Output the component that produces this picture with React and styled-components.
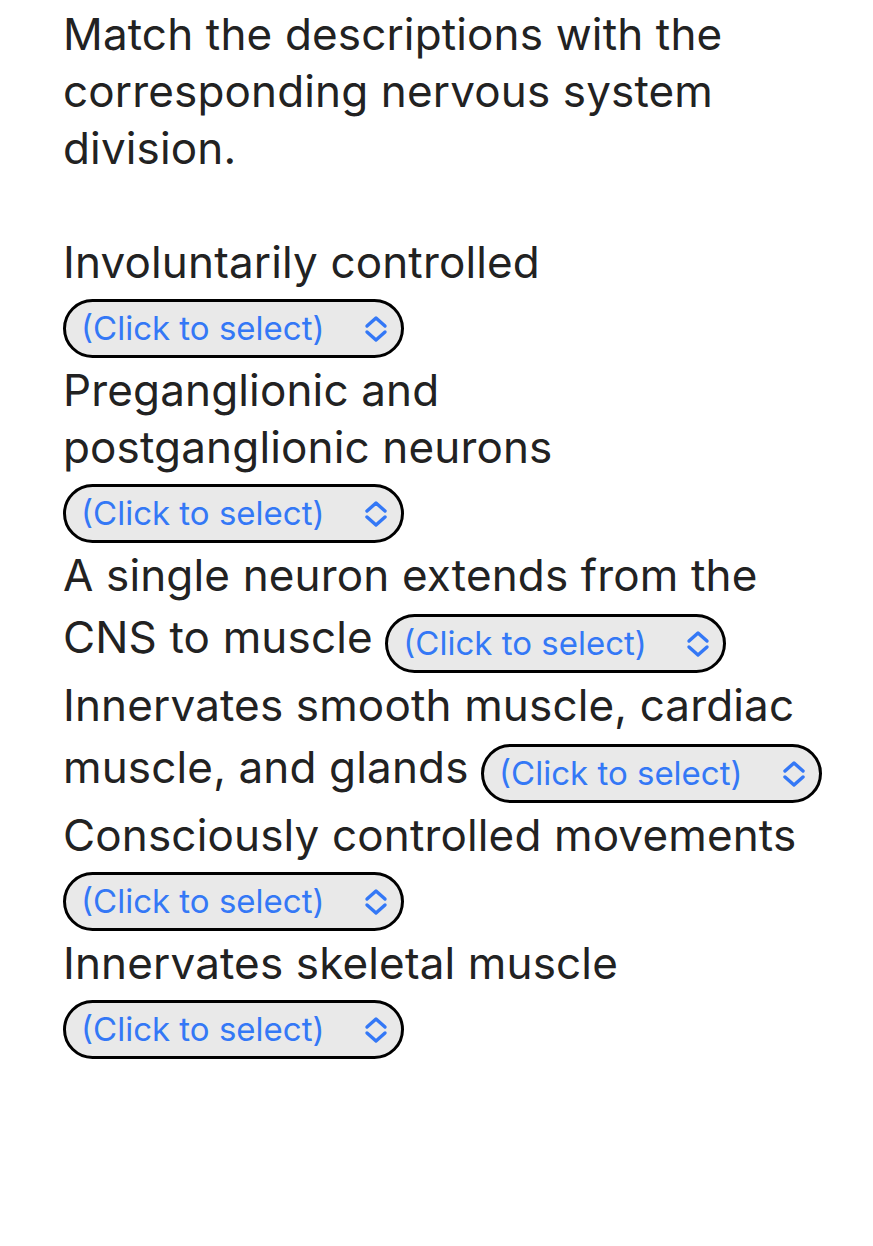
import React from "react";
import styled, { createGlobalStyle } from "styled-components";

const GlobalStyle = createGlobalStyle`
  body {
    margin: 0;
    background: #ffffff;
  }
`;

const Page = styled.div`
  padding: 6px 0 0 63px;
  font-family: "Inter", "Noto Sans", sans-serif;
  font-size: 44px;
  line-height: 57px;
  letter-spacing: 0.15px;
  color: #222222;
`;

const Prompt = styled.p`
  margin: 0 0 57px;
`;

const Question = styled.div`
  white-space: nowrap;
`;

const Picker = styled.label`
  display: ${(p) => (p.$block ? "flex" : "inline-flex")};
  width: 341px;
  height: 59px;
  box-sizing: border-box;
  align-items: center;
  justify-content: space-between;
  padding: 0 13px 0 15px;
  margin: ${(p) => (p.$block ? "8px 0 4px" : "10px 0 4px")};
  vertical-align: middle;
  background: #e9e9e9;
  border: 3px solid #000000;
  border-radius: 30px;
  color: #3478f6;
  font-size: 33px;
  letter-spacing: 0;
  line-height: 1;
  cursor: pointer;
`;

const Chevrons = () => (
  <svg width="24" height="30" viewBox="0 0 24 30" fill="none">
    <path
      d="M3 12 L12 4 L21 12 M3 18 L12 26 L21 18"
      stroke="#3478f6"
      strokeWidth="3.4"
      strokeLinecap="round"
      strokeLinejoin="round"
    />
  </svg>
);

function Select({ block }) {
  return (
    <Picker $block={block}>
      <span>(Click to select)</span>
      <Chevrons />
    </Picker>
  );
}

export default function App() {
  return (
    <>
      <GlobalStyle />
      <Page>
        <Prompt>
          Match the descriptions with the
          <br />
          corresponding nervous system
          <br />
          division.
        </Prompt>

        <Question>
          Involuntarily controlled
          <Select block />
        </Question>
        <Question>
          Preganglionic and
          <br />
          postganglionic neurons
          <Select block />
        </Question>
        <Question>
          A single neuron extends from the
          <br />
          CNS to muscle <Select />
        </Question>
        <Question>
          Innervates smooth muscle, cardiac
          <br />
          muscle, and glands <Select />
        </Question>
        <Question>
          Consciously controlled movements
          <Select block />
        </Question>
        <Question>
          Innervates skeletal muscle
          <Select block />
        </Question>
      </Page>
    </>
  );
}
